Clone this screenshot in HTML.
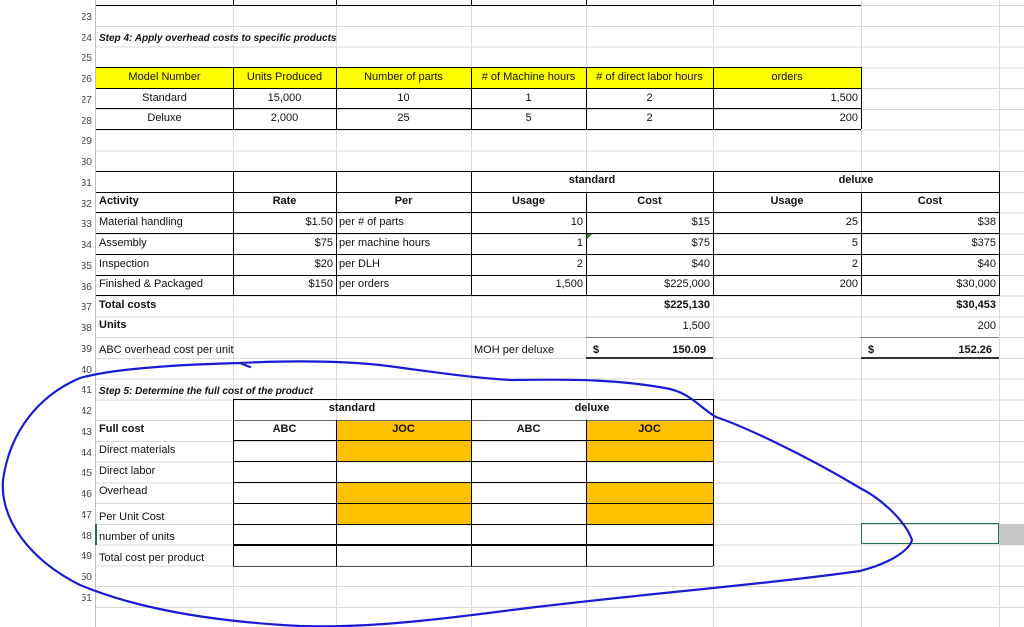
<!DOCTYPE html>
<html><head><meta charset="utf-8"><style>
body{margin:0;width:1024px;height:627px;overflow:hidden;background:#fff;position:relative;font-family:"Liberation Sans",Arial,sans-serif;font-size:11px;color:#111}
.grid{position:absolute;left:96px;top:5px;width:928px;height:622px;background:repeating-linear-gradient(to bottom,#d9d9d9 0,#d9d9d9 1px,transparent 1px,transparent 20.75px)}
.v{position:absolute;width:1px;background:#d9d9d9;top:0;height:627px}
.bv{position:absolute;width:1px;background:#000}
.bh{position:absolute;height:1px;background:#000}
.t{position:absolute;height:20px;line-height:20px;white-space:nowrap;overflow:hidden;padding:0 3px;box-sizing:border-box}
.r{text-align:right}.c{text-align:center}.b{font-weight:bold}
.rn{position:absolute;left:78px;width:16px;height:20px;line-height:24px;color:#444;font-size:10.5px;text-align:right;padding-right:2px;box-sizing:border-box}
.fill{position:absolute}
</style></head><body>
<div class="grid"></div>
<div class="v" style="left:95px;background:#bfbfbf"></div>
<div class="v" style="left:233px"></div><div class="v" style="left:336px"></div><div class="v" style="left:471px"></div>
<div class="v" style="left:586px"></div><div class="v" style="left:713px"></div><div class="v" style="left:861px"></div><div class="v" style="left:999px"></div>

<div class="fill" style="left:96px;top:67px;width:765px;height:21px;background:#ffff00"></div>
<div class="fill" style="left:336px;top:420px;width:135px;height:41px;background:#ffc000"></div>
<div class="fill" style="left:586px;top:420px;width:127px;height:41px;background:#ffc000"></div>
<div class="fill" style="left:336px;top:482px;width:135px;height:42px;background:#ffc000"></div>
<div class="fill" style="left:586px;top:482px;width:127px;height:42px;background:#ffc000"></div>
<div class="fill" style="left:999px;top:524px;width:25px;height:21px;background:#c8c8c8"></div>
<div class="fill" style="left:861px;top:523px;width:138px;height:21px;border:1px solid #217346;box-sizing:border-box"></div>

<div class="bh" style="left:96px;top:5px;width:765px"></div>
<div class="bv" style="left:233px;top:0;height:5px"></div><div class="bv" style="left:336px;top:0;height:5px"></div>
<div class="bv" style="left:471px;top:0;height:5px"></div><div class="bv" style="left:586px;top:0;height:5px"></div><div class="bv" style="left:713px;top:0;height:5px"></div>

<div class="bh" style="left:96px;top:67px;width:765px"></div>
<div class="bh" style="left:96px;top:88px;width:765px"></div>
<div class="bh" style="left:96px;top:108px;width:765px"></div>
<div class="bh" style="left:96px;top:129px;width:765px"></div>
<div class="bv" style="left:233px;top:67px;height:62px"></div><div class="bv" style="left:336px;top:67px;height:62px"></div>
<div class="bv" style="left:471px;top:67px;height:62px"></div><div class="bv" style="left:586px;top:67px;height:62px"></div>
<div class="bv" style="left:713px;top:67px;height:62px"></div><div class="bv" style="left:861px;top:67px;height:62px"></div>

<div class="bh" style="left:96px;top:171px;width:904px"></div>
<div class="bh" style="left:96px;top:192px;width:904px"></div>
<div class="bh" style="left:96px;top:212px;width:904px"></div>
<div class="bh" style="left:96px;top:233px;width:904px"></div>
<div class="bh" style="left:96px;top:254px;width:904px"></div>
<div class="bh" style="left:96px;top:275px;width:904px"></div>
<div class="bh" style="left:96px;top:295px;width:904px"></div>
<div class="bv" style="left:233px;top:171px;height:124px"></div><div class="bv" style="left:336px;top:171px;height:124px"></div>
<div class="bv" style="left:471px;top:171px;height:124px"></div><div class="bv" style="left:586px;top:192px;height:103px"></div>
<div class="bv" style="left:713px;top:171px;height:124px"></div><div class="bv" style="left:861px;top:192px;height:103px"></div>
<div class="bv" style="left:999px;top:171px;height:124px"></div>
<div class="bh" style="left:586px;top:337px;width:127px;background:#777"></div>
<div class="bh" style="left:586px;top:357px;width:127px;height:2px;background:#333"></div>
<div class="bh" style="left:861px;top:337px;width:138px;background:#777"></div>
<div class="bh" style="left:861px;top:357px;width:138px;height:2px;background:#333"></div>

<div class="bh" style="left:233px;top:399px;width:480px"></div>
<div class="bh" style="left:233px;top:420px;width:480px;background:#666"></div>
<div class="bh" style="left:233px;top:440px;width:480px"></div>
<div class="bh" style="left:233px;top:461px;width:480px"></div>
<div class="bh" style="left:233px;top:482px;width:480px"></div>
<div class="bh" style="left:233px;top:503px;width:480px"></div>
<div class="bh" style="left:233px;top:524px;width:480px"></div>
<div class="bh" style="left:233px;top:544px;width:480px;height:2px"></div>
<div class="bh" style="left:233px;top:566px;width:480px;background:#555"></div>
<div class="bv" style="left:233px;top:399px;height:167px"></div><div class="bv" style="left:336px;top:420px;height:146px"></div>
<div class="bv" style="left:471px;top:399px;height:167px"></div><div class="bv" style="left:586px;top:420px;height:146px"></div>
<div class="bv" style="left:713px;top:399px;height:167px"></div>

<div class="rn" style="top:5px">23</div><div class="rn" style="top:26px">24</div><div class="rn" style="top:46px">25</div>
<div class="rn" style="top:67px">26</div><div class="rn" style="top:88px">27</div><div class="rn" style="top:109px">28</div>
<div class="rn" style="top:129px">29</div><div class="rn" style="top:150px">30</div><div class="rn" style="top:171px">31</div>
<div class="rn" style="top:192px">32</div><div class="rn" style="top:212px">33</div><div class="rn" style="top:233px">34</div>
<div class="rn" style="top:254px">35</div><div class="rn" style="top:275px">36</div><div class="rn" style="top:295px">37</div>
<div class="rn" style="top:316px">38</div><div class="rn" style="top:337px">39</div><div class="rn" style="top:358px">40</div>
<div class="rn" style="top:378px">41</div><div class="rn" style="top:399px">42</div><div class="rn" style="top:420px">43</div>
<div class="rn" style="top:441px">44</div><div class="rn" style="top:461px">45</div><div class="rn" style="top:482px">46</div>
<div class="rn" style="top:503px">47</div><div class="rn" style="top:524px">48</div><div class="rn" style="top:544px">49</div>
<div class="rn" style="top:565px">50</div><div class="rn" style="top:586px">51</div>
<div style="position:absolute;left:0;top:0;width:82px;height:627px;background:#fff"></div>

<div class="t b" style="left:96px;top:29px;width:300px;font-style:italic;font-size:10px">Step 4: Apply overhead costs to specific products</div>
<div class="t c" style="left:96px;top:67px;width:137px">Model Number</div>
<div class="t c" style="left:233px;top:67px;width:103px">Units Produced</div>
<div class="t c" style="left:336px;top:67px;width:135px">Number of parts</div>
<div class="t c" style="left:471px;top:67px;width:115px"># of Machine hours</div>
<div class="t c" style="left:586px;top:67px;width:127px"># of direct labor hours</div>
<div class="t c" style="left:713px;top:67px;width:148px">orders</div>
<div class="t c" style="left:96px;top:88px;width:137px">Standard</div>
<div class="t c" style="left:233px;top:88px;width:103px">15,000</div>
<div class="t c" style="left:336px;top:88px;width:135px">10</div>
<div class="t c" style="left:471px;top:88px;width:115px">1</div>
<div class="t c" style="left:586px;top:88px;width:127px">2</div>
<div class="t r" style="left:713px;top:88px;width:148px">1,500</div>
<div class="t c" style="left:96px;top:108px;width:137px">Deluxe</div>
<div class="t c" style="left:233px;top:108px;width:103px">2,000</div>
<div class="t c" style="left:336px;top:108px;width:135px">25</div>
<div class="t c" style="left:471px;top:108px;width:115px">5</div>
<div class="t c" style="left:586px;top:108px;width:127px">2</div>
<div class="t r" style="left:713px;top:108px;width:148px">200</div>

<div class="t c b" style="left:471px;top:170px;width:242px">standard</div>
<div class="t c b" style="left:713px;top:170px;width:286px">deluxe</div>
<div class="t b" style="left:96px;top:191px;width:137px">Activity</div>
<div class="t c b" style="left:233px;top:191px;width:103px">Rate</div>
<div class="t c b" style="left:336px;top:191px;width:135px">Per</div>
<div class="t c b" style="left:471px;top:191px;width:115px">Usage</div>
<div class="t c b" style="left:586px;top:191px;width:127px">Cost</div>
<div class="t c b" style="left:713px;top:191px;width:148px">Usage</div>
<div class="t c b" style="left:861px;top:191px;width:138px">Cost</div>

<div class="t" style="left:96px;top:212px;width:137px">Material handling</div>
<div class="t r" style="left:233px;top:212px;width:103px">$1.50</div>
<div class="t" style="left:336px;top:212px;width:135px">per # of parts</div>
<div class="t r" style="left:471px;top:212px;width:115px">10</div>
<div class="t r" style="left:586px;top:212px;width:127px">$15</div>
<div class="t r" style="left:713px;top:212px;width:148px">25</div>
<div class="t r" style="left:861px;top:212px;width:138px">$38</div>

<div class="t" style="left:96px;top:233px;width:137px">Assembly</div>
<div class="t r" style="left:233px;top:233px;width:103px">$75</div>
<div class="t" style="left:336px;top:233px;width:135px">per machine hours</div>
<div class="t r" style="left:471px;top:233px;width:115px">1</div>
<div class="t r" style="left:586px;top:233px;width:127px">$75</div>
<div class="t r" style="left:713px;top:233px;width:148px">5</div>
<div class="t r" style="left:861px;top:233px;width:138px">$375</div>
<svg style="position:absolute;left:587px;top:234px" width="6" height="6"><polygon points="0,0 5,0 0,5" fill="#1e7b34"/></svg>

<div class="t" style="left:96px;top:254px;width:137px">Inspection</div>
<div class="t r" style="left:233px;top:254px;width:103px">$20</div>
<div class="t" style="left:336px;top:254px;width:135px">per DLH</div>
<div class="t r" style="left:471px;top:254px;width:115px">2</div>
<div class="t r" style="left:586px;top:254px;width:127px">$40</div>
<div class="t r" style="left:713px;top:254px;width:148px">2</div>
<div class="t r" style="left:861px;top:254px;width:138px">$40</div>

<div class="t" style="left:96px;top:274px;width:137px">Finished &amp; Packaged</div>
<div class="t r" style="left:233px;top:274px;width:103px">$150</div>
<div class="t" style="left:336px;top:274px;width:135px">per orders</div>
<div class="t r" style="left:471px;top:274px;width:115px">1,500</div>
<div class="t r" style="left:586px;top:274px;width:127px">$225,000</div>
<div class="t r" style="left:713px;top:274px;width:148px">200</div>
<div class="t r" style="left:861px;top:274px;width:138px">$30,000</div>

<div class="t b" style="left:96px;top:295px;width:137px">Total costs</div>
<div class="t r b" style="left:586px;top:295px;width:127px">$225,130</div>
<div class="t r b" style="left:861px;top:295px;width:138px">$30,453</div>
<div class="t b" style="left:96px;top:315px;width:137px">Units</div>
<div class="t r" style="left:586px;top:316px;width:127px">1,500</div>
<div class="t r" style="left:861px;top:316px;width:138px">200</div>
<div class="t" style="left:96px;top:340px;width:240px">ABC overhead cost per unit</div>
<div class="t" style="left:471px;top:340px;width:115px">MOH per deluxe</div>
<div class="t b" style="left:590px;top:340px;width:20px">$</div>
<div class="t r b" style="left:586px;top:340px;width:123px">150.09</div>
<div class="t b" style="left:865px;top:340px;width:20px">$</div>
<div class="t r b" style="left:861px;top:340px;width:134px">152.26</div>

<div class="t b" style="left:96px;top:382px;width:300px;font-style:italic;font-size:10px">Step 5: Determine the full cost of the product</div>
<div class="t c b" style="left:233px;top:398px;width:238px">standard</div>
<div class="t c b" style="left:471px;top:398px;width:242px">deluxe</div>
<div class="t b" style="left:96px;top:419px;width:137px">Full cost</div>
<div class="t c b" style="left:233px;top:419px;width:103px">ABC</div>
<div class="t c b" style="left:336px;top:419px;width:135px">JOC</div>
<div class="t c b" style="left:471px;top:419px;width:115px">ABC</div>
<div class="t c b" style="left:586px;top:419px;width:127px">JOC</div>
<div class="t" style="left:96px;top:440px;width:137px">Direct materials</div>
<div class="t" style="left:96px;top:461px;width:137px">Direct labor</div>
<div class="t" style="left:96px;top:481px;width:137px">Overhead</div>
<div class="t" style="left:96px;top:507px;width:137px">Per Unit Cost</div>
<div class="t" style="left:96px;top:527px;width:137px">number of units</div>
<div class="t" style="left:96px;top:548px;width:137px">Total cost per product</div>
<div style="position:absolute;left:95px;top:524px;width:2px;height:21px;background:#217346"></div>

<svg style="position:absolute;left:0;top:0" width="1024" height="627">
<path d="M250,367 L240,363 C200,364 120,367 80,378 C40,395 10,430 3,480 C0,520 30,560 80,585 C140,610 220,622 300,626 C360,628 420,622 512,610 C620,596 760,585 860,571 C895,562 910,548 912,540 C905,520 880,498 860,488 C800,452 740,425 716,417 C700,408 690,392 665,388 C620,380 580,379 512,380 C470,378 420,370 380,365 C330,360 280,361 240,363" fill="none" stroke="#1a1ad4" stroke-width="2.2" stroke-linecap="round"/>
</svg>
</body></html>
